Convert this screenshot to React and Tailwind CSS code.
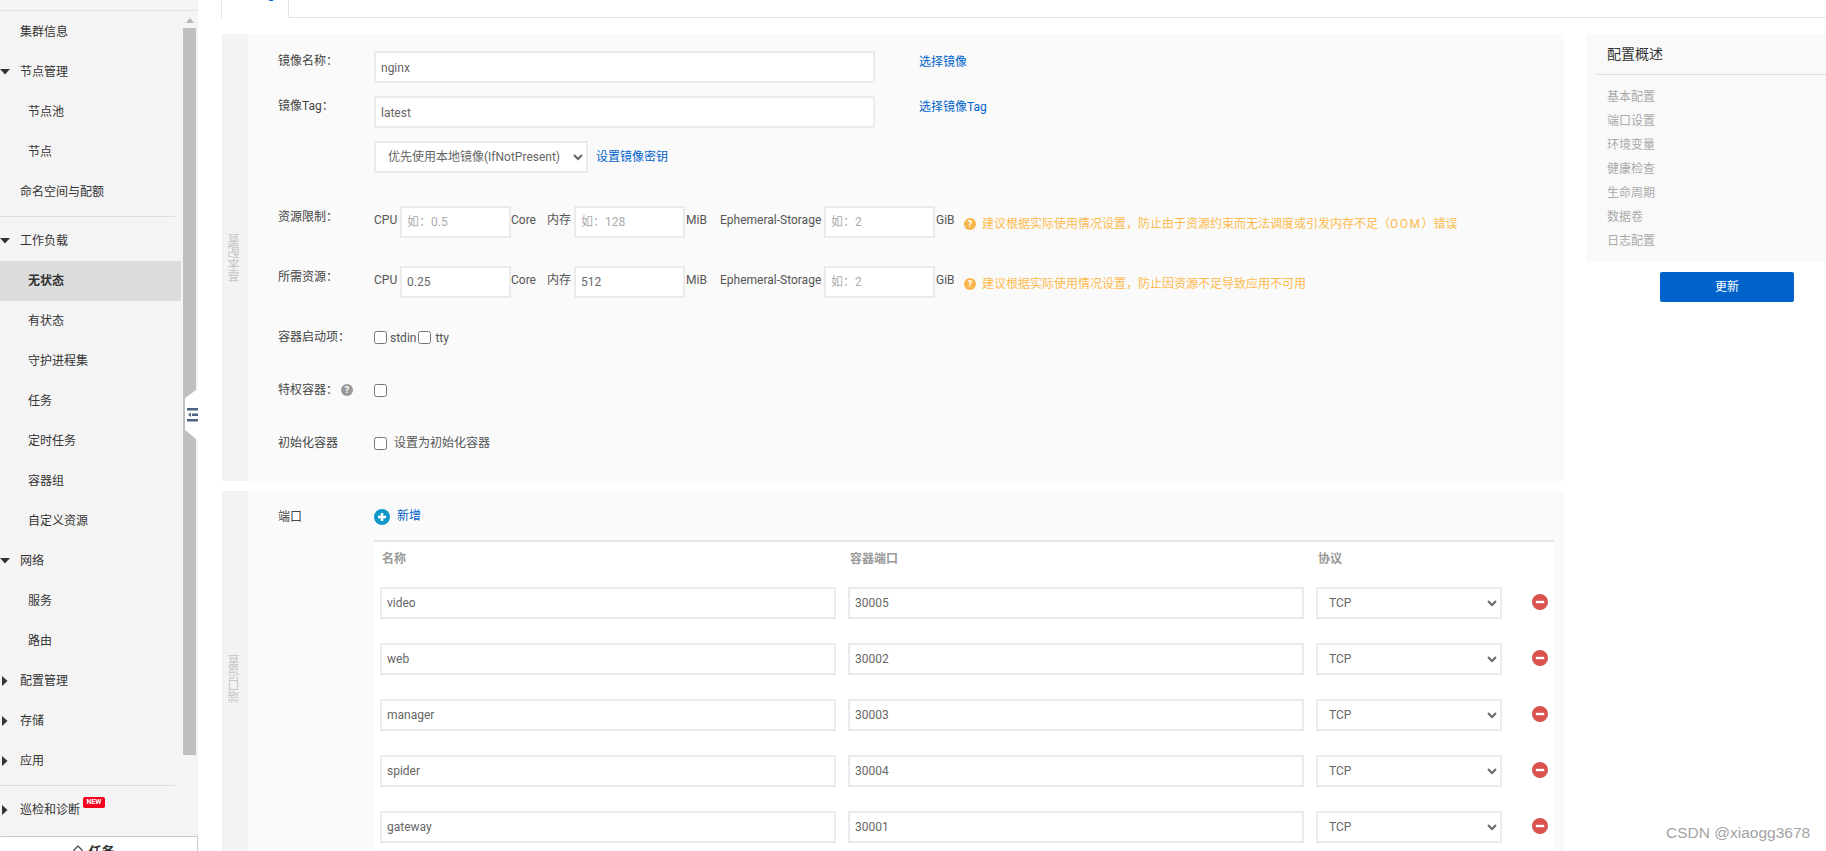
import React from 'react';

const navItems = [
  { name: '集群信息', level: 1 },
  { name: '节点管理', level: 1, arrow: 'down' },
  { name: '节点池', level: 2 },
  { name: '节点', level: 2 },
  { name: '命名空间与配额', level: 1 },
  { divider: true },
  { name: '工作负载', level: 1, arrow: 'down' },
  { name: '无状态', level: 2, active: true },
  { name: '有状态', level: 2 },
  { name: '守护进程集', level: 2 },
  { name: '任务', level: 2 },
  { name: '定时任务', level: 2 },
  { name: '容器组', level: 2 },
  { name: '自定义资源', level: 2 },
  { name: '网络', level: 1, arrow: 'down' },
  { name: '服务', level: 2 },
  { name: '路由', level: 2 },
  { name: '配置管理', level: 1, arrow: 'right' },
  { name: '存储', level: 1, arrow: 'right' },
  { name: '应用', level: 1, arrow: 'right' },
  { divider: true },
  { name: '巡检和诊断', level: 1, arrow: 'right', badge: true },
];

const ports = [
  { name: 'video', port: '30005' },
  { name: 'web', port: '30002' },
  { name: 'manager', port: '30003' },
  { name: 'spider', port: '30004' },
  { name: 'gateway', port: '30001' },
];

const overview = ['基本配置', '端口设置', '环境变量', '健康检查', '生命周期', '数据卷', '日志配置'];

const Arrow = ({ dir }) =>
  dir === 'down' ? (
    <svg width="10" height="6" viewBox="0 0 10 6" className="absolute left-0 top-[17px]">
      <polygon points="0,0 10,0 5,5.5" fill="#333" />
    </svg>
  ) : (
    <svg width="6" height="10" viewBox="0 0 6 10" className="absolute left-[2px] top-[15px]">
      <polygon points="0,0 5.5,5 0,10" fill="#333" />
    </svg>
  );

const NavRow = ({ item }) => {
  if (item.divider) {
    return <div className="mt-1 mb-1 h-px w-[175px] bg-[#dedede]" />;
  }
  return (
    <div
      className={`relative flex h-10 w-[181px] items-center text-[12px] text-[#333] ${item.level === 2 ? 'pl-7' : 'pl-5'} ${item.active ? 'bg-[#dcdcdc] font-bold' : ''}`}
    >
      {item.arrow && <Arrow dir={item.arrow} />}
      <span>{item.name}</span>
      {item.badge && (
        <span className="absolute left-[83px] top-[7px] flex h-[11px] w-[22px] items-center justify-center rounded-[2px] bg-[#f5001d] text-[7px] font-bold leading-none text-white">
          NEW
        </span>
      )}
    </div>
  );
};

const Sidebar = () => (
  <aside className="relative h-full w-[198px] shrink-0 overflow-hidden bg-[#f4f4f4]">
    <div className="h-[11px] border-b border-[#e2e2e2]" />
    <nav className="pt-px">
      {navItems.map((item, i) => (
        <NavRow key={i} item={item} />
      ))}
    </nav>

    <div className="absolute left-[183px] top-[17px] flex h-[738px] w-[13px] flex-col items-center">
      <svg width="8" height="5" viewBox="0 0 8 5" className="mt-[1px] mb-[5px] shrink-0">
        <polygon points="0,5 8,5 4,0" fill="#b5b5b5" />
      </svg>
      <div className="w-full flex-1 bg-[#bfbfbf]" />
    </div>

    <svg width="15" height="70" viewBox="0 0 15 70" className="absolute left-[183px] top-[380px]">
      <polygon points="2,18 13,10 15,10 15,60 13,59 2,50" fill="#fff" />
      <rect x="4" y="28" width="11" height="2.5" fill="#4f6480" />
      <rect x="9" y="33.5" width="6" height="2.5" fill="#4f6480" />
      <polygon points="8,32.5 8,37 5,34.8" fill="#4f6480" />
      <rect x="4" y="39" width="11" height="2.5" fill="#4f6480" />
    </svg>

    <div className="absolute bottom-0 left-0 flex h-[15px] w-[198px] items-start justify-center gap-1 overflow-hidden rounded-t-[2px] border-t border-r border-[#c9c9c9] bg-white pt-[8px] pr-[10px]">
      <svg width="12" height="12" viewBox="0 0 12 12" fill="none" stroke="#444" strokeWidth="1.2">
        <path d="M6 1 L10 5 V11 H2 V5 Z" />
      </svg>
      <span className="text-[13px] font-bold leading-none text-[#333]">任务</span>
    </div>
  </aside>
);

const Field = ({ className = '', ...props }) => (
  <input
    readOnly
    className={`h-8 border-2 border-[#ebebeb] bg-white px-[5px] text-[12px] text-[#666] outline-none placeholder:text-[#aaa] ${className}`}
    {...props}
  />
);

const Picker = ({ className = '', children }) => (
  <select className={`h-8 border-2 border-[#ebebeb] bg-white text-[12px] text-[#666] outline-none ${className}`}>
    {children}
  </select>
);

const Strip = ({ title }) => (
  <div className="flex w-[26px] shrink-0 items-center justify-center bg-[#f3f3f3]">
    <span className="rotate-180 text-[12px] text-[#c6c6c6] [writing-mode:vertical-rl]">{title}</span>
  </div>
);

const Hint = ({ children }) => (
  <div className="flex items-center gap-[6px] pt-[10px] text-[12px] leading-4 whitespace-nowrap text-[#fdbb4e]">
    <span className="flex h-3 w-3 items-center justify-center rounded-full bg-[#f8b64a] text-[9px] font-bold leading-none text-white">?</span>
    <span>{children}</span>
  </div>
);

const ResourceRow = ({ label, cpu, mem, hint, className }) => (
  <div className={`flex h-8 items-start text-[12px] whitespace-nowrap text-[#555] ${className}`}>
    <span className="w-24 pt-[3px] leading-4 text-[#444]">{label}</span>
    <span className="w-[26px] pt-[6px] leading-4">CPU</span>
    <Field className="w-[111px]" placeholder="如：0.5" defaultValue={cpu} />
    <span className="w-9 pt-[6px] leading-4">Core</span>
    <span className="w-[27px] pt-[6px] leading-4">内存</span>
    <Field className="w-[111px]" placeholder="如：128" defaultValue={mem} />
    <span className="ml-px w-[34px] pt-[6px] leading-4">MiB</span>
    <span className="w-[104px] pt-[6px] leading-4">Ephemeral-Storage</span>
    <Field className="w-[111px]" placeholder="如：2" />
    <span className="ml-px w-7 pt-[6px] leading-4">GiB</span>
    <Hint>{hint}</Hint>
  </div>
);

const CheckRow = ({ label, className, children }) => (
  <div className={`flex items-center text-[12px] leading-4 text-[#444] ${className}`}>
    <span className="flex w-24 items-center">{label}</span>
    {children}
  </div>
);

const Check = ({ className = '' }) => (
  <input type="checkbox" className={`m-0 h-[13px] w-[13px] ${className}`} />
);

const BasicCard = () => (
  <section className="flex h-[447px] shrink-0 bg-[#fafafa]">
    <Strip title="基本配置" />
    <div className="flex-1 pl-[30px] text-[12px]">
      <div className="mt-[17px] flex h-8 items-start">
        <span className="w-24 pt-[2px] leading-4 text-[#444]">镜像名称：</span>
        <Field className="w-[501px] pt-[2px]" defaultValue="nginx" />
        <a className="ml-11 pt-[3px] leading-4 text-[#0063cb]">选择镜像</a>
      </div>
      <div className="mt-[13px] flex h-8 items-start">
        <span className="w-24 pt-[2px] leading-4 text-[#444]">镜像Tag：</span>
        <Field className="w-[501px] pt-[2px]" defaultValue="latest" />
        <a className="ml-11 pt-[3px] leading-4 text-[#0063cb]">选择镜像Tag</a>
      </div>
      <div className="mt-[13px] flex h-8 items-center pl-24">
        <Picker className="w-[214px] pl-2">
          <option>优先使用本地镜像(IfNotPresent)</option>
        </Picker>
        <a className="ml-2 leading-4 text-[#0063cb]">设置镜像密钥</a>
      </div>
      <ResourceRow
        className="mt-[33px]"
        label="资源限制："
        hint={
          <>
            建议根据实际使用情况设置，防止由于资源约束而无法调度或引发内存不足（<span className="tracking-[1.5px]">OOM</span>）错误
          </>
        }
      />
      <ResourceRow
        className="mt-7"
        label="所需资源："
        cpu="0.25"
        mem="512"
        hint="建议根据实际使用情况设置，防止因资源不足导致应用不可用"
      />
      <CheckRow label="容器启动项：" className="mt-[30px]">
        <Check />
        <span className="mr-[2px] ml-[3px] pt-[2px] text-[#555]">stdin</span>
        <Check />
        <span className="ml-[4px] pt-[2px] text-[#555]">tty</span>
      </CheckRow>
      <CheckRow
        className="mt-[36px]"
        label={
          <>
            特权容器：
            <span className="ml-[3px] flex h-3 w-3 items-center justify-center rounded-full bg-[#999] text-[9px] font-bold leading-none text-white">?</span>
          </>
        }
      >
        <Check />
      </CheckRow>
      <CheckRow label="初始化容器" className="mt-[37px]">
        <Check />
        <span className="ml-[7px] text-[#555]">设置为初始化容器</span>
      </CheckRow>
    </div>
  </section>
);

const PlusIcon = () => (
  <svg width="16" height="16" viewBox="0 0 16 16">
    <circle cx="8" cy="8" r="8" fill="#0f97c9" />
    <rect x="4" y="6.7" width="8" height="2.6" fill="#fff" />
    <rect x="6.7" y="4" width="2.6" height="8" fill="#fff" />
  </svg>
);

const MinusIcon = () => (
  <svg width="16" height="16" viewBox="0 0 16 16" className="ml-[30px] -mt-[3px] shrink-0">
    <circle cx="8" cy="8" r="8" fill="#d9534f" />
    <rect x="3.8" y="6.8" width="8.4" height="2.4" fill="#fff" />
  </svg>
);

const PortCard = () => (
  <section className="mt-[10px] flex flex-1 bg-[#fafafa]">
    <Strip title="端口设置" />
    <div className="flex min-w-0 flex-1 pl-[30px] text-[12px]">
      <span className="w-24 pt-[18px] leading-4 text-[#444]">端口</span>
      <div className="w-[1180px]">
        <div className="flex h-[49px] items-start pt-[18px]">
          <PlusIcon />
          <a className="ml-[7px] leading-[14px] text-[#0063cb]">新增</a>
        </div>
        <div className="h-full border-t-2 border-[#e5e5e5] bg-white pl-[6px]">
          <div className="flex h-[45px] items-start pt-[9px] font-semibold leading-4 text-[#999]">
            <span className="ml-[2px] w-[468px]">名称</span>
            <span className="w-[468px]">容器端口</span>
            <span>协议</span>
          </div>
          {ports.map((row) => (
            <div key={row.name} className="mb-6 flex h-8 items-center">
              <Field className="w-[456px]" defaultValue={row.name} />
              <Field className="ml-3 w-[456px]" defaultValue={row.port} />
              <Picker className="ml-3 w-[186px] pl-[7px]">
                <option>TCP</option>
                <option>UDP</option>
              </Picker>
              <MinusIcon />
            </div>
          ))}
        </div>
      </div>
    </div>
  </section>
);

const Overview = () => (
  <div className="ml-[23px] flex-1">
    <div className="h-[228px] bg-[#f9f9f9] pl-[10px]">
      <h3 className="flex h-[41px] items-center border-b border-[#dedede] pl-[10px] text-[14px] font-normal text-[#333]">配置概述</h3>
      <ul className="pt-[10px] pl-[10px] text-[12px] leading-6 text-[#aaa]">
        {overview.map((name) => (
          <li key={name}>{name}</li>
        ))}
      </ul>
    </div>
    <button className="ml-[73px] mt-[10px] flex h-[30px] w-[134px] items-center justify-center rounded-[2px] bg-[#0063cb] text-[12px] text-white">
      更新
    </button>
  </div>
);

export default function App() {
  return (
    <div className="relative flex h-[851px] w-[1826px] overflow-hidden bg-white font-['Roboto','Noto_Sans_CJK_SC',sans-serif]">
      <Sidebar />
      <main className="flex min-w-0 flex-1 flex-col">
        <div className="flex h-[18px] shrink-0 pl-[23px]">
          <div className="w-[68px] overflow-hidden border-x border-[#e2e2e2] text-center text-[14px] leading-4 text-[#0063cb]">
            <div className="-mt-[15px]">Config</div>
          </div>
          <div className="flex-1 border-b border-[#e2e2e2]" />
        </div>
        <div className="flex min-h-0 flex-1 pt-4 pl-6">
          <div className="flex w-[1342px] shrink-0 flex-col">
            <BasicCard />
            <PortCard />
          </div>
          <Overview />
        </div>
      </main>
      <div className="absolute left-[1666px] top-[823px] font-['Liberation_Sans',sans-serif] text-[15.5px] leading-5 text-[#a3a3a3]">
        CSDN @xiaogg3678
      </div>
    </div>
  );
}
